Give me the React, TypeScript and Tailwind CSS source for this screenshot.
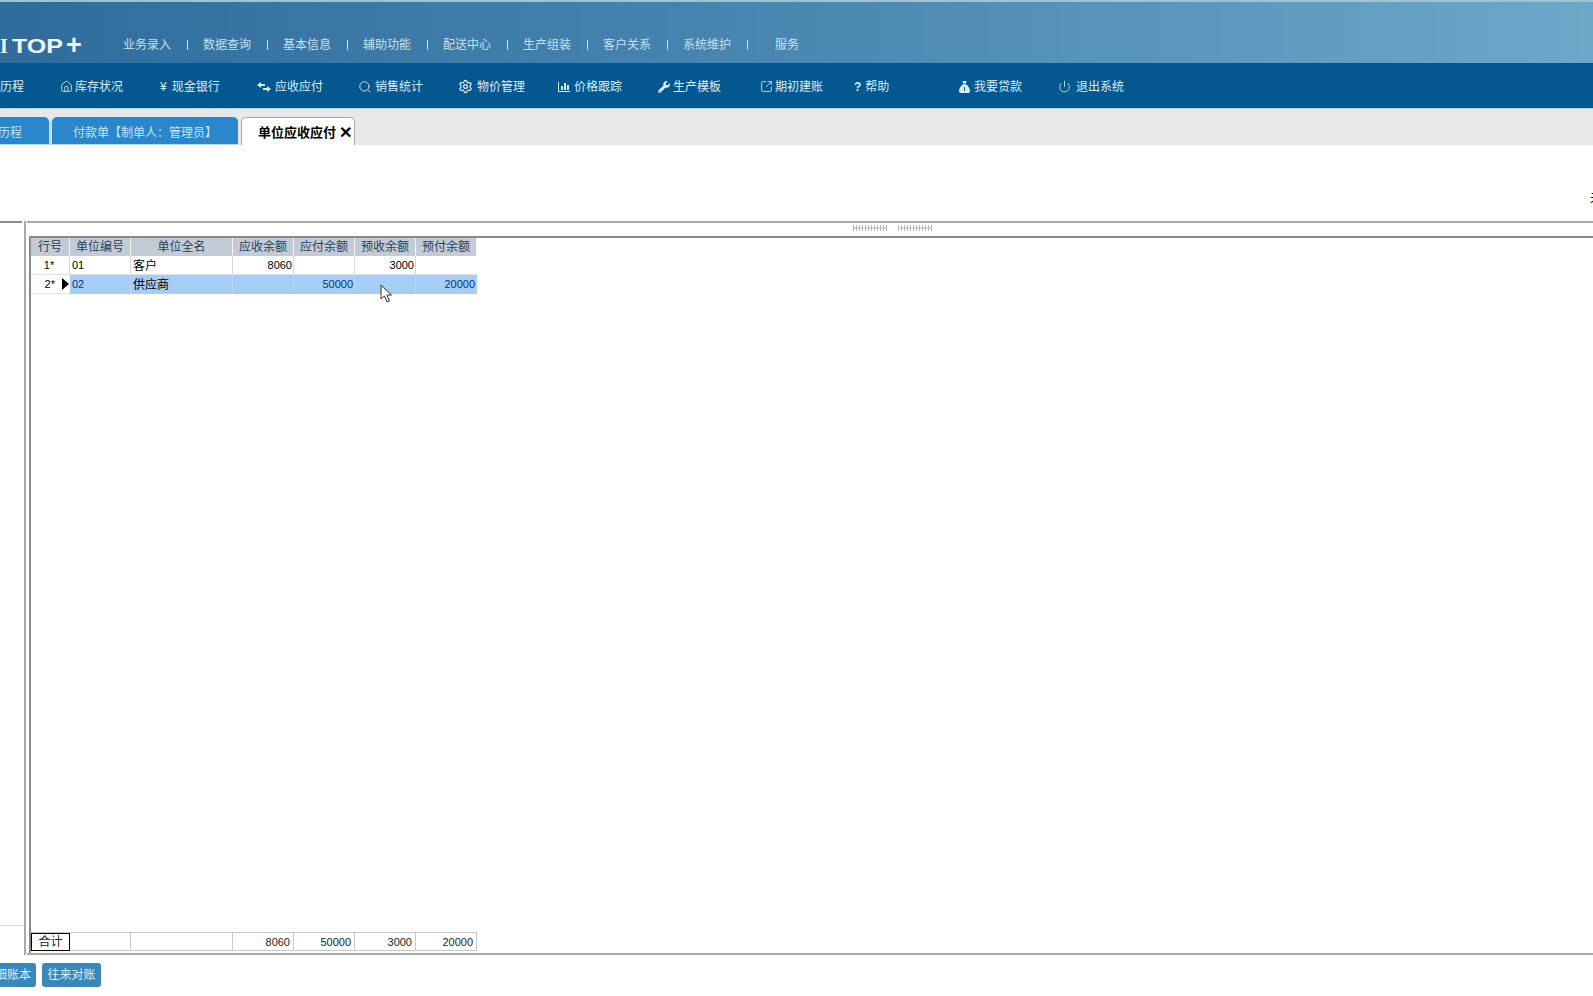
import { Home, Search, Settings, SquareArrowOutUpRight, Power } from "lucide-react";
import { FaWrench } from "react-icons/fa";

const topMenu = ["业务录入", "数据查询", "基本信息", "辅助功能", "配送中心", "生产组装", "客户关系", "系统维护"];

const ArrowsIcon = () => (
  <svg width="14" height="10" viewBox="0 0 14 10" fill="currentColor">
    <path d="M0 3 L4 0 V2 H8 V4 H4 V6 Z" />
    <path d="M14 7 L10 4 V6 H6 V8 H10 V10 Z" />
  </svg>
);

const BagIcon = () => (
  <svg width="11" height="12" viewBox="0 0 11 12" fill="currentColor">
    <path d="M3.5 0 H7.5 L6.8 2.5 H4.2 Z" />
    <path fillRule="evenodd" d="M4 3.2 H7 C9.5 5 11 7.5 11 10 C11 11.4 10 12 9 12 H2 C1 12 0 11.4 0 10 C0 7.5 1.5 5 4 3.2 Z M5 6 V10 H6 V6 Z" />
  </svg>
);

const ChartIcon = () => (
  <svg width="12" height="11" viewBox="0 0 12 11" fill="currentColor">
    <path d="M0 1 H1 V10 H12 V11 H0 Z" />
    <path d="M3 5 H5 V9 H3 Z M6 2 H8 V9 H6 Z M9 4 H11 V9 H9 Z" />
  </svg>
);

const Grip = () => (
  <svg width="34" height="6" viewBox="0 0 34 6" stroke="#b8b8b8" strokeWidth="1">
    <path d="M0.5 0 V6 M3.5 0 V6 M6.5 0 V6 M9.5 0 V6 M12.5 0 V6 M15.5 0 V6 M18.5 0 V6 M21.5 0 V6 M24.5 0 V6 M27.5 0 V6 M30.5 0 V6 M33.5 0 V6 M0 3 H34" />
  </svg>
);

const navItems = [
  { label: "历程", cls: "w-[60px]", icon: null },
  { label: "库存状况", cls: "w-[100px] gap-[2px]", icon: <Home size={13} strokeWidth={1.5} /> },
  { label: "现金银行", cls: "w-[97px] gap-[5px]", icon: <span className="text-xs leading-none">¥</span> },
  { label: "应收应付", cls: "w-[101px] gap-[4px]", icon: <ArrowsIcon /> },
  { label: "销售统计", cls: "w-[100px] gap-[3px]", icon: <Search size={14} strokeWidth={1.5} /> },
  { label: "物价管理", cls: "w-[100px] gap-[4px]", icon: <Settings size={15} strokeWidth={2} /> },
  { label: "价格跟踪", cls: "w-[100px] gap-[4px]", icon: <ChartIcon /> },
  { label: "生产模板", cls: "w-[102px] gap-[3px]", icon: <FaWrench size={12} /> },
  { label: "期初建账", cls: "w-[94px] gap-[2px]", icon: <SquareArrowOutUpRight size={13} strokeWidth={1.5} /> },
  { label: "帮助", cls: "w-[105px] gap-[4px]", icon: <span className="text-xs font-bold leading-none">?</span> },
  { label: "我要贷款", cls: "w-[99px] gap-[4px]", icon: <BagIcon /> },
  { label: "退出系统", cls: "w-[100px] gap-[5px]", icon: <Power size={13} strokeWidth={1.5} /> },
];

const gridCols = "grid grid-cols-[39px_61px_102px_61px_61px_61px_61px] w-[446px]";
const headers = ["行号", "单位编号", "单位全名", "应收余额", "应付余额", "预收余额", "预付余额"];

export default function App() {
  return (
    <div className="relative flex h-[996px] w-full flex-col overflow-hidden bg-white font-['Liberation_Sans','Noto_Sans_CJK_SC',sans-serif] text-xs text-black">
      {/* top bar */}
      <div className="flex h-[63px] items-end border-t-2 border-[#a9c0cb] bg-gradient-to-r from-[#2f6c9c] via-[#4a87b1] to-[#6da8c9] pb-[10px] text-[#c4e0f0]">
        <div className="mb-[-6px] flex w-[123px] items-center self-end text-[#eef7fc]">
          <span className="w-[12px] font-['Liberation_Serif'] text-[20px] font-bold leading-none">I</span>
          <span className="w-[54px] origin-left scale-x-125 text-[20px] font-bold leading-none">TOP</span>
          <span className="text-[27px] font-bold leading-none">+</span>
        </div>
        {topMenu.map((m) => (
          <div key={m} className="flex w-[80px] items-center">
            <span className="w-[64px]">{m}</span>
            <span className="h-[10px] w-px bg-[#d5e8f2]" />
          </div>
        ))}
        <span className="ml-[12px]">服务</span>
      </div>

      {/* nav */}
      <div className="flex h-[46px] items-center border-b border-[#a8d4ea] bg-[#04588f] pt-[2px] text-[#dcecf5]">
        {navItems.map((n) => (
          <div key={n.label} className={`flex items-center ${n.cls}`}>
            {n.icon}
            <span>{n.label}</span>
          </div>
        ))}
      </div>

      {/* tabs */}
      <div className="flex h-[36px] items-end bg-[#e8e8e8]">
        <div className="flex h-[28px] w-[49px] items-center overflow-hidden rounded-tr-[5px] border-b border-[#a8dcf0] bg-[#2a87cc] pt-[4px] text-[#c8e4f6]">
          <span className="ml-[-2px]">历程</span>
        </div>
        <div className="h-[26px] w-[3px] bg-[#bfe2f2]" />
        <div className="flex h-[28px] w-[186px] items-center justify-center rounded-t-[5px] border-b border-[#a8dcf0] bg-[#2a87cc] pt-[4px] text-[#c8e4f6]">付款单【制单人：管理员】</div>
        <div className="w-[3px]" />
        <div className="flex h-[28px] w-[114px] items-center justify-end gap-[3px] rounded-t-[5px] border border-b-0 border-[#a8a8a8] bg-white pr-[2px] pt-[2px] text-[13px] font-bold">
          <span>单位应收应付</span>
          <span className="text-[16px] leading-none">✕</span>
        </div>
      </div>

      {/* toolbar */}
      <div className="flex h-[76px] items-center justify-end overflow-hidden">
        <span className="mr-[-10px] mt-[30px] text-[13px]">未</span>
      </div>

      {/* main */}
      <div className="flex flex-1">
        <div className="w-[26px] border-r-2 border-[#a8a8a8]">
          <div className="mr-[2px] border-t-2 border-[#8c8c8c]" />
          <div className="mt-[702px] border-t border-[#dddddd]" />
        </div>
        <div className="w-px" />
        <div className="flex flex-1 flex-col border-y-2 border-[#a8a8a8]">
          <div className="flex h-[13px] items-center gap-[11px] pb-[3px] pl-[826px]">
            <Grip />
            <Grip />
          </div>
          <div className="ml-[2px] flex flex-1 flex-col border-l-2 border-t-2 border-[#8a8a8a]">
            {/* grid */}
            <div className={`${gridCols} h-[18px] bg-[#c3ccd6] text-[#1f3f60]`}>
              {headers.map((h) => (
                <div key={h} className="flex items-center justify-center border-r border-[#f4f4f4] text-center">{h}</div>
              ))}
            </div>
            <div className={`${gridCols} h-[19px] border-b border-[#e0e0e0] text-[11px]`}>
              <div className="flex items-center justify-center border-r border-[#d8d8d8] pr-[2px]">1*</div>
              <div className="flex items-center border-r border-[#d8d8d8] pl-[2px]">01</div>
              <div className="flex items-center border-r border-[#d8d8d8] pl-[2px] pt-[1px] text-xs">客户</div>
              <div className="flex items-center justify-end border-r border-[#d8d8d8] pr-[1px]">8060</div>
              <div className="border-r border-[#d8d8d8]" />
              <div className="flex items-center justify-end border-r border-[#d8d8d8] pr-[1px]">3000</div>
              <div />
            </div>
            <div className={`${gridCols} h-[19px] text-[11px]`}>
              <div className="flex items-center justify-end gap-[7px] border-b border-[#e0e0e0] pr-[1px]">
                <span>2*</span>
                <svg width="7" height="12" viewBox="0 0 7 12"><path d="M0 0 L7 6 L0 12 Z" fill="#000" /></svg>
              </div>
              <div className="flex items-center border-r border-[#b6d6f6] bg-[#a6cdf6] pl-[2px] text-[#12306b]">02</div>
              <div className="flex items-center border-r border-[#b6d6f6] bg-[#a6cdf6] pl-[2px] text-xs">供应商</div>
              <div className="border-r border-[#b6d6f6] bg-[#a6cdf6]" />
              <div className="flex items-center justify-end border-r border-[#b6d6f6] bg-[#a6cdf6] pr-[1px] text-[#12306b]">50000</div>
              <div className="border-r border-[#b6d6f6] bg-[#a6cdf6]" />
              <div className="flex items-center justify-end bg-[#a6cdf6] pr-[2px] text-[#12306b]">20000</div>
            </div>
            <div className="flex-1" />
            <div className={`${gridCols} h-[19px] border-y border-[#c8c8c8] text-[11px] text-[#222]`}>
              <div className="flex items-center justify-center border border-black text-xs">合计</div>
              <div className="border-r border-[#c8c8c8]" />
              <div className="border-r border-[#c8c8c8]" />
              <div className="flex items-center justify-end border-r border-[#c8c8c8] pr-[3px]">8060</div>
              <div className="flex items-center justify-end border-r border-[#c8c8c8] pr-[3px]">50000</div>
              <div className="flex items-center justify-end border-r border-[#c8c8c8] pr-[3px]">3000</div>
              <div className="flex items-center justify-end border-r border-[#c8c8c8] pr-[3px]">20000</div>
            </div>
            <div className="h-[2px]" />
          </div>
        </div>
      </div>

      {/* footer buttons */}
      <div className="flex h-[41px] items-start gap-[6px] pt-[8px]">
        <div className="flex h-[24px] w-[36px] items-center justify-end overflow-hidden rounded-r-[3px] bg-[#3889ba] pr-[5px] text-[#d8f0fa]">
          <span className="whitespace-nowrap">明细账本</span>
        </div>
        <div className="flex h-[24px] w-[59px] items-center justify-center rounded-[3px] bg-[#3889ba] text-[#d8f0fa]">往来对账</div>
      </div>

      {/* mouse pointer */}
      <svg className="absolute left-[380px] top-[284px]" width="13" height="20" viewBox="0 0 13 20">
        <path d="M1 1 V15 L4.5 12 L7 18 L9.5 17 L7 11 H11.5 Z" fill="#fff" stroke="#333" strokeWidth="1" />
      </svg>
    </div>
  );
}
